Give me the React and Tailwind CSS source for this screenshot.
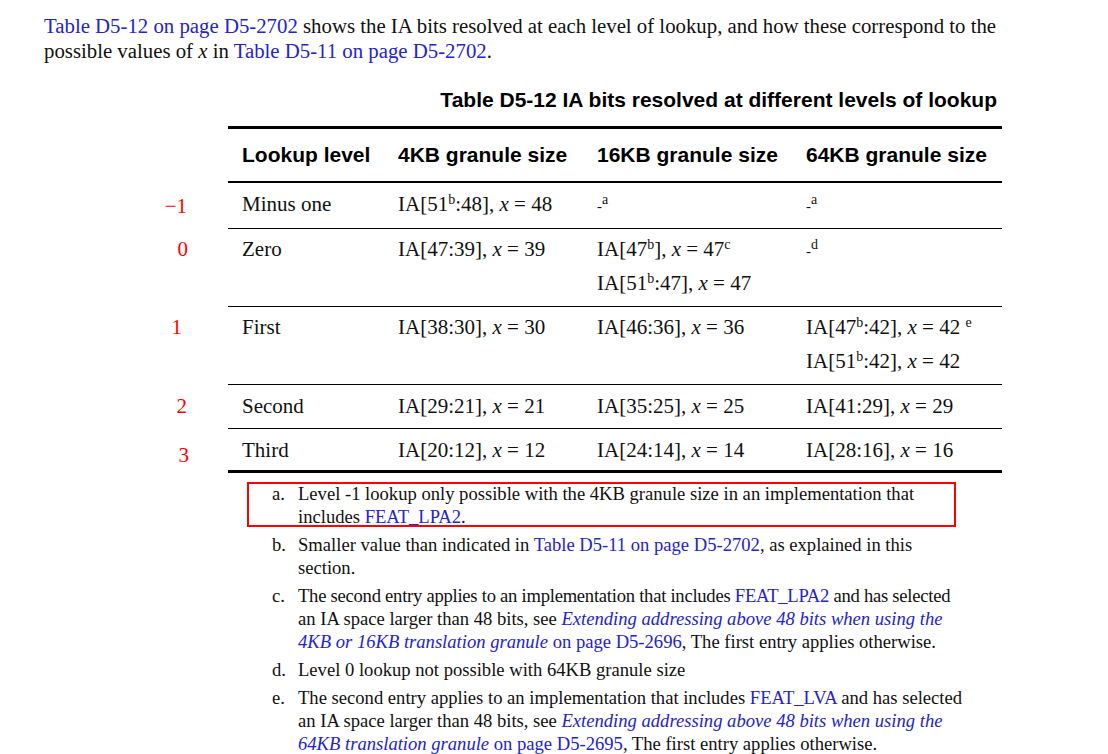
const serif = { fontFamily: '"Liberation Serif", "Times New Roman", serif' };
const sans = { fontFamily: '"Liberation Sans", Arial, sans-serif' };

const Link = ({ children, italic }) => (
  <span className={`text-[#2323cf] ${italic ? 'italic' : ''}`}>{children}</span>
);

const X = () => <span className="italic">x</span>;
const Sup = ({ children }) => <sup className="text-[14px]">{children}</sup>;
const Dash = ({ note }) => (
  <span className="text-[15px]">-<Sup>{note}</Sup></span>
);

const rows = [
  {
    n: '−1', nCls: 'pr-[41px] pt-[11px]', h: 'h-[46px]', pt: 'pt-[9px]',
    name: 'Minus one',
    k4: [<>IA[51<Sup>b</Sup>:48], <X /> = 48</>],
    k16: [<Dash note="a" />],
    k64: [<Dash note="a" />],
  },
  {
    n: '0', nCls: 'pr-[40px] pt-[8px]', h: 'h-[78px]', pt: 'pt-[8px]',
    name: 'Zero',
    k4: [<>IA[47:39], <X /> = 39</>],
    k16: [<>IA[47<Sup>b</Sup>], <X /> = 47<Sup>c</Sup></>, <>IA[51<Sup>b</Sup>:47], <X /> = 47</>],
    k64: [<Dash note="d" />],
  },
  {
    n: '1', nCls: 'pr-[46px] pt-[8px]', h: 'h-[78px]', pt: 'pt-[8px]',
    name: 'First',
    k4: [<>IA[38:30], <X /> = 30</>],
    k16: [<>IA[46:36], <X /> = 36</>],
    k64: [<>IA[47<Sup>b</Sup>:42], <X /> = 42 <Sup>e</Sup></>, <>IA[51<Sup>b</Sup>:42], <X /> = 42</>],
  },
  {
    n: '2', nCls: 'pr-[41px] pt-[9px]', h: 'h-[44px]', pt: 'pt-[9px]',
    name: 'Second',
    k4: [<>IA[29:21], <X /> = 21</>],
    k16: [<>IA[35:25], <X /> = 25</>],
    k64: [<>IA[41:29], <X /> = 29</>],
  },
  {
    n: '3', nCls: 'pr-[39px] pt-[14px]', h: 'h-[44px] border-b-[3px]', pt: 'pt-[9px]',
    name: 'Third',
    k4: [<>IA[20:12], <X /> = 12</>],
    k16: [<>IA[24:14], <X /> = 14</>],
    k64: [<>IA[28:16], <X /> = 16</>],
  },
];

const cols = ['w-[156px]', 'w-[199px]', 'w-[209px]', 'w-[210px]'];

function Cell({ w, pt, lines }) {
  return (
    <div className={`${w} ${pt} pl-[14px] flex flex-col gap-[10px] whitespace-nowrap`}>
      {lines.map((l, i) => (
        <div key={i} className="leading-[24px]">{l}</div>
      ))}
    </div>
  );
}

const notes = [
  {
    k: 'a.',
    lines: [
      <>Level -1 lookup only possible with the 4KB granule size in an implementation that</>,
      <>includes <Link>FEAT_LPA2</Link>.</>,
    ],
  },
  {
    k: 'b.',
    lines: [
      <>Smaller value than indicated in <Link>Table D5-11 on page D5-2702</Link>, as explained in this</>,
      <>section.</>,
    ],
  },
  {
    k: 'c.',
    lines: [
      <span className="tracking-[-0.25px]">The second entry applies to an implementation that includes <Link>FEAT_LPA2</Link> and has selected</span>,
      <>an IA space larger than 48 bits, see <Link italic>Extending addressing above 48 bits when using the</Link></>,
      <><Link italic>4KB or 16KB translation granule</Link> <Link>on page D5-2696</Link>, The first entry applies otherwise.</>,
    ],
  },
  { k: 'd.', lines: [<>Level 0 lookup not possible with 64KB granule size</>] },
  {
    k: 'e.',
    lines: [
      <>The second entry applies to an implementation that includes <Link>FEAT_LVA</Link> and has selected</>,
      <>an IA space larger than 48 bits, see <Link italic>Extending addressing above 48 bits when using the</Link></>,
      <><Link italic>64KB translation granule</Link> <Link>on page D5-2695</Link>, The first entry applies otherwise.</>,
    ],
  },
];

function Note({ k, lines }) {
  return (
    <div className="flex text-[18.6px] leading-[23px] whitespace-nowrap">
      <div className="w-[26px] shrink-0">{k}</div>
      <div>
        {lines.map((l, i) => (
          <div key={i}>{l}</div>
        ))}
      </div>
    </div>
  );
}

export default function App() {
  return (
    <div className="w-[1108px] h-[754px] overflow-hidden bg-white text-[#111]" style={serif}>
      <p className="pl-[44px] pt-[13px] text-[20.8px] leading-[25px] whitespace-nowrap">
        <Link>Table D5-12 on page D5-2702</Link> shows the IA bits resolved at each level of lookup, and how these correspond to the
        <br />
        possible values of <X /> in <Link>Table D5-11 on page D5-2702</Link>.
      </p>

      <div className="w-[997px] mt-[25px] text-right text-[21px] leading-[24px] font-bold text-black" style={sans}>
        Table D5-12 IA bits resolved at different levels of lookup
      </div>

      <div className="mt-[14px] text-[21px]">
        <div className="flex">
          <div className="w-[228px] shrink-0" />
          <div className="flex items-center h-[57px] border-t-[3px] border-b-[2px] border-black font-bold text-black text-[21px]" style={sans}>
            {['Lookup level', '4KB granule size', '16KB granule size', '64KB granule size'].map((t, i) => (
              <div key={t} className={`${cols[i]} pl-[14px] whitespace-nowrap`}>{t}</div>
            ))}
          </div>
        </div>

        {rows.map((r) => (
          <div key={r.name} className="flex">
            <div className={`w-[228px] shrink-0 text-right text-[#f00] leading-[24px] ${r.nCls}`}>{r.n}</div>
            <div className={`flex ${r.h} border-b border-black`}>
              <Cell w={cols[0]} pt={r.pt} lines={[r.name]} />
              <Cell w={cols[1]} pt={r.pt} lines={r.k4} />
              <Cell w={cols[2]} pt={r.pt} lines={r.k16} />
              <Cell w={cols[3]} pt={r.pt} lines={r.k64} />
            </div>
          </div>
        ))}
      </div>

      <div className="ml-[247px] mt-[9px] w-[709px] flex flex-col gap-[5px]">
        <div className="h-[45px] border-2 border-[#f00] pl-[23px]">
          <div className="-mt-[2px]">
            <Note {...notes[0]} />
          </div>
        </div>
        <div className="pl-[25px] flex flex-col gap-[5px] mt-[1px]">
          {notes.slice(1).map((n) => (
            <Note key={n.k} {...n} />
          ))}
        </div>
      </div>
    </div>
  );
}
